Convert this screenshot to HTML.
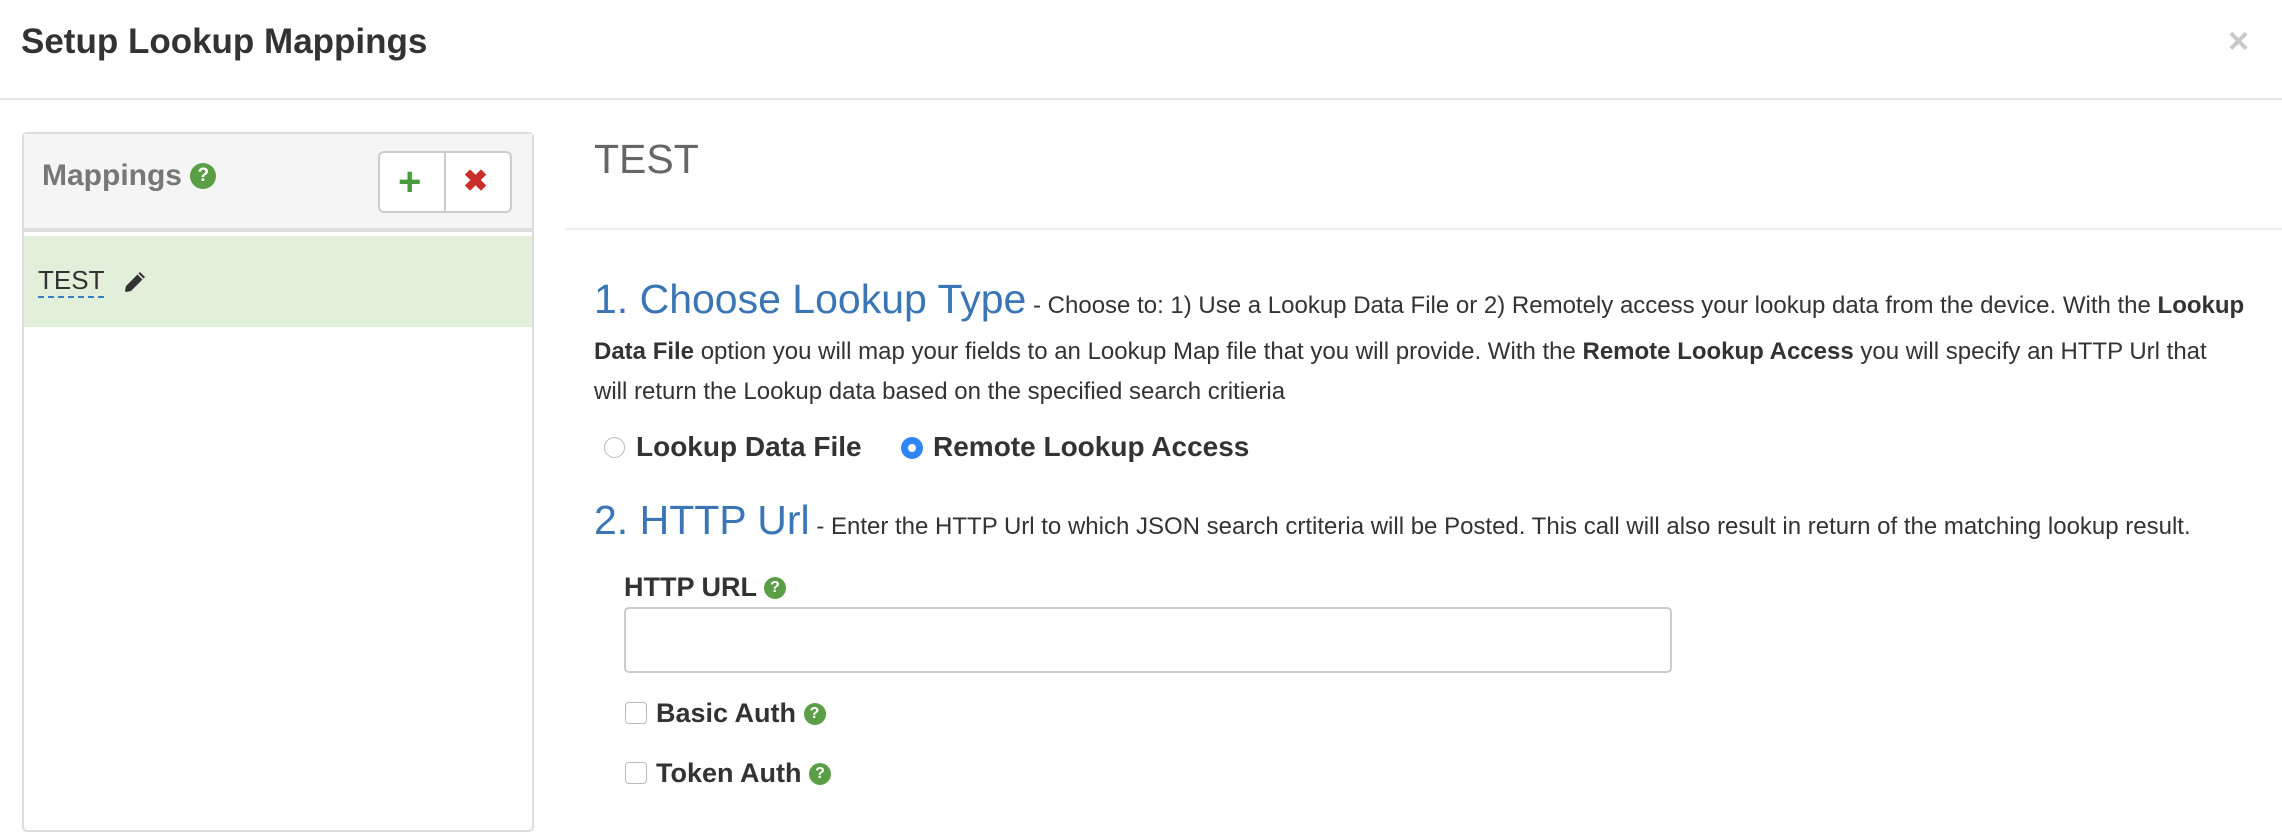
<!DOCTYPE html>
<html><head><meta charset="utf-8"><style>
*{box-sizing:border-box;margin:0;padding:0}
body{width:2282px;height:818px;overflow:hidden;background:#fff;font-family:"Liberation Sans",Arial,sans-serif;color:#333;position:relative}
.a{position:absolute;white-space:nowrap}
.help{display:inline-block;border-radius:50%;background:#5a9e46;color:#fff;font-weight:bold;text-align:center;vertical-align:middle}
.desc{font-size:24px;color:#333}
.cb{position:absolute;width:22px;height:22px;border:1px solid #bbb;border-radius:4px;background:#fff}
</style></head><body>
<div class="a" style="left:21px;top:22px;font-size:35px;font-weight:bold;color:#333">Setup Lookup Mappings</div>
<div class="a" style="left:2228px;top:20px;font-size:36px;font-weight:bold;color:#c8c8c8">×</div>
<div class="a" style="left:0;top:98px;width:2282px;height:2px;background:#e5e5e5"></div>

<!-- left panel -->
<div class="a" style="left:22px;top:132px;width:512px;height:700px;border:2px solid #ddd;border-radius:5px;background:#fff"></div>
<div class="a" style="left:24px;top:134px;width:508px;height:98px;background:#f5f5f5;border-bottom:4px solid #ddd"></div>
<div class="a" style="left:42px;top:159px;font-size:30px;font-weight:bold;color:#777">Mappings <span class="help" style="width:26px;height:26px;font-size:19px;line-height:26px;vertical-align:4px">?</span></div>
<div class="a" style="left:378px;top:151px;width:134px;height:62px;border:2px solid #ccc;border-radius:6px;background:#fff"></div>
<div class="a" style="left:444px;top:153px;width:2px;height:58px;background:#ccc"></div>
<div class="a" style="left:398px;top:160px;font-size:40px;font-weight:bold;color:#4a9a3f;line-height:44px">+</div>
<div class="a" style="left:463px;top:164px;font-size:30px;font-weight:bold;color:#c9302c;line-height:36px">✖</div>
<div class="a" style="left:24px;top:236px;width:508px;height:91px;background:#e1efdb"></div>
<div class="a" style="left:38px;top:264px;font-size:26px;color:#333;border-bottom:2px dashed #3a7fc1;line-height:32px">TEST</div>
<svg class="a" style="left:123px;top:270px" width="24" height="24" viewBox="0 0 24 24"><path d="M17 2 L22 7 L8 21 L3 22 L2 21 L3 16 Z" fill="#333"/><path d="M15 4 L20 9" stroke="#e1efdb" stroke-width="1.5"/></svg>

<!-- right -->
<div class="a" style="left:594px;top:136px;font-size:41px;color:#666">TEST</div>
<div class="a" style="left:565px;top:228px;width:1717px;height:2px;background:#eee"></div>

<div class="a" style="left:594px;top:278px;line-height:42px" >
<span style="font-size:41px;color:#3a76b5">1. Choose Lookup Type</span><span class="desc"> - Choose to: 1) Use a Lookup Data File or 2) Remotely access your lookup data from the device. With the <b>Lookup</b></span></div>
<div class="a desc" style="left:594px;top:334px;line-height:36px">
<b>Data File</b> option you will map your fields to an Lookup Map file that you will provide. With the <b>Remote Lookup Access</b> you will specify an HTTP Url that</div>
<div class="a desc" style="left:594px;top:374px;line-height:36px">will return the Lookup data based on the specified search critieria</div>

<div class="a" style="left:604px;top:437px;width:21px;height:21px;border:1px solid #bbb;border-radius:50%;background:#fff"></div>
<div class="a" style="left:636px;top:431px;font-size:28px;font-weight:bold">Lookup Data File</div>
<div class="a" style="left:901px;top:437px;width:22px;height:22px;border-radius:50%;background:#2f86f6"></div>
<div class="a" style="left:908px;top:444px;width:8px;height:8px;border-radius:50%;background:#fff"></div>
<div class="a" style="left:933px;top:431px;font-size:28px;font-weight:bold">Remote Lookup Access</div>

<div class="a" style="left:594px;top:496px;line-height:48px"><span style="font-size:41px;color:#3a76b5">2. HTTP Url</span><span class="desc"> - Enter the HTTP Url to which JSON search crtiteria will be Posted. This call will also result in return of the matching lookup result.</span></div>

<div class="a" style="left:624px;top:572px;font-size:27px;font-weight:bold">HTTP URL <span class="help" style="width:22px;height:22px;font-size:16px;line-height:22px;vertical-align:4px">?</span></div>
<div class="a" style="left:624px;top:607px;width:1048px;height:66px;border:2px solid #ccc;border-radius:5px"></div>

<div class="cb" style="left:625px;top:702px"></div>
<div class="a" style="left:656px;top:698px;font-size:27px;font-weight:bold">Basic Auth <span class="help" style="width:22px;height:22px;font-size:16px;line-height:22px;vertical-align:4px">?</span></div>
<div class="cb" style="left:625px;top:762px"></div>
<div class="a" style="left:656px;top:758px;font-size:27px;font-weight:bold">Token Auth <span class="help" style="width:22px;height:22px;font-size:16px;line-height:22px;vertical-align:4px">?</span></div>
</body></html>
